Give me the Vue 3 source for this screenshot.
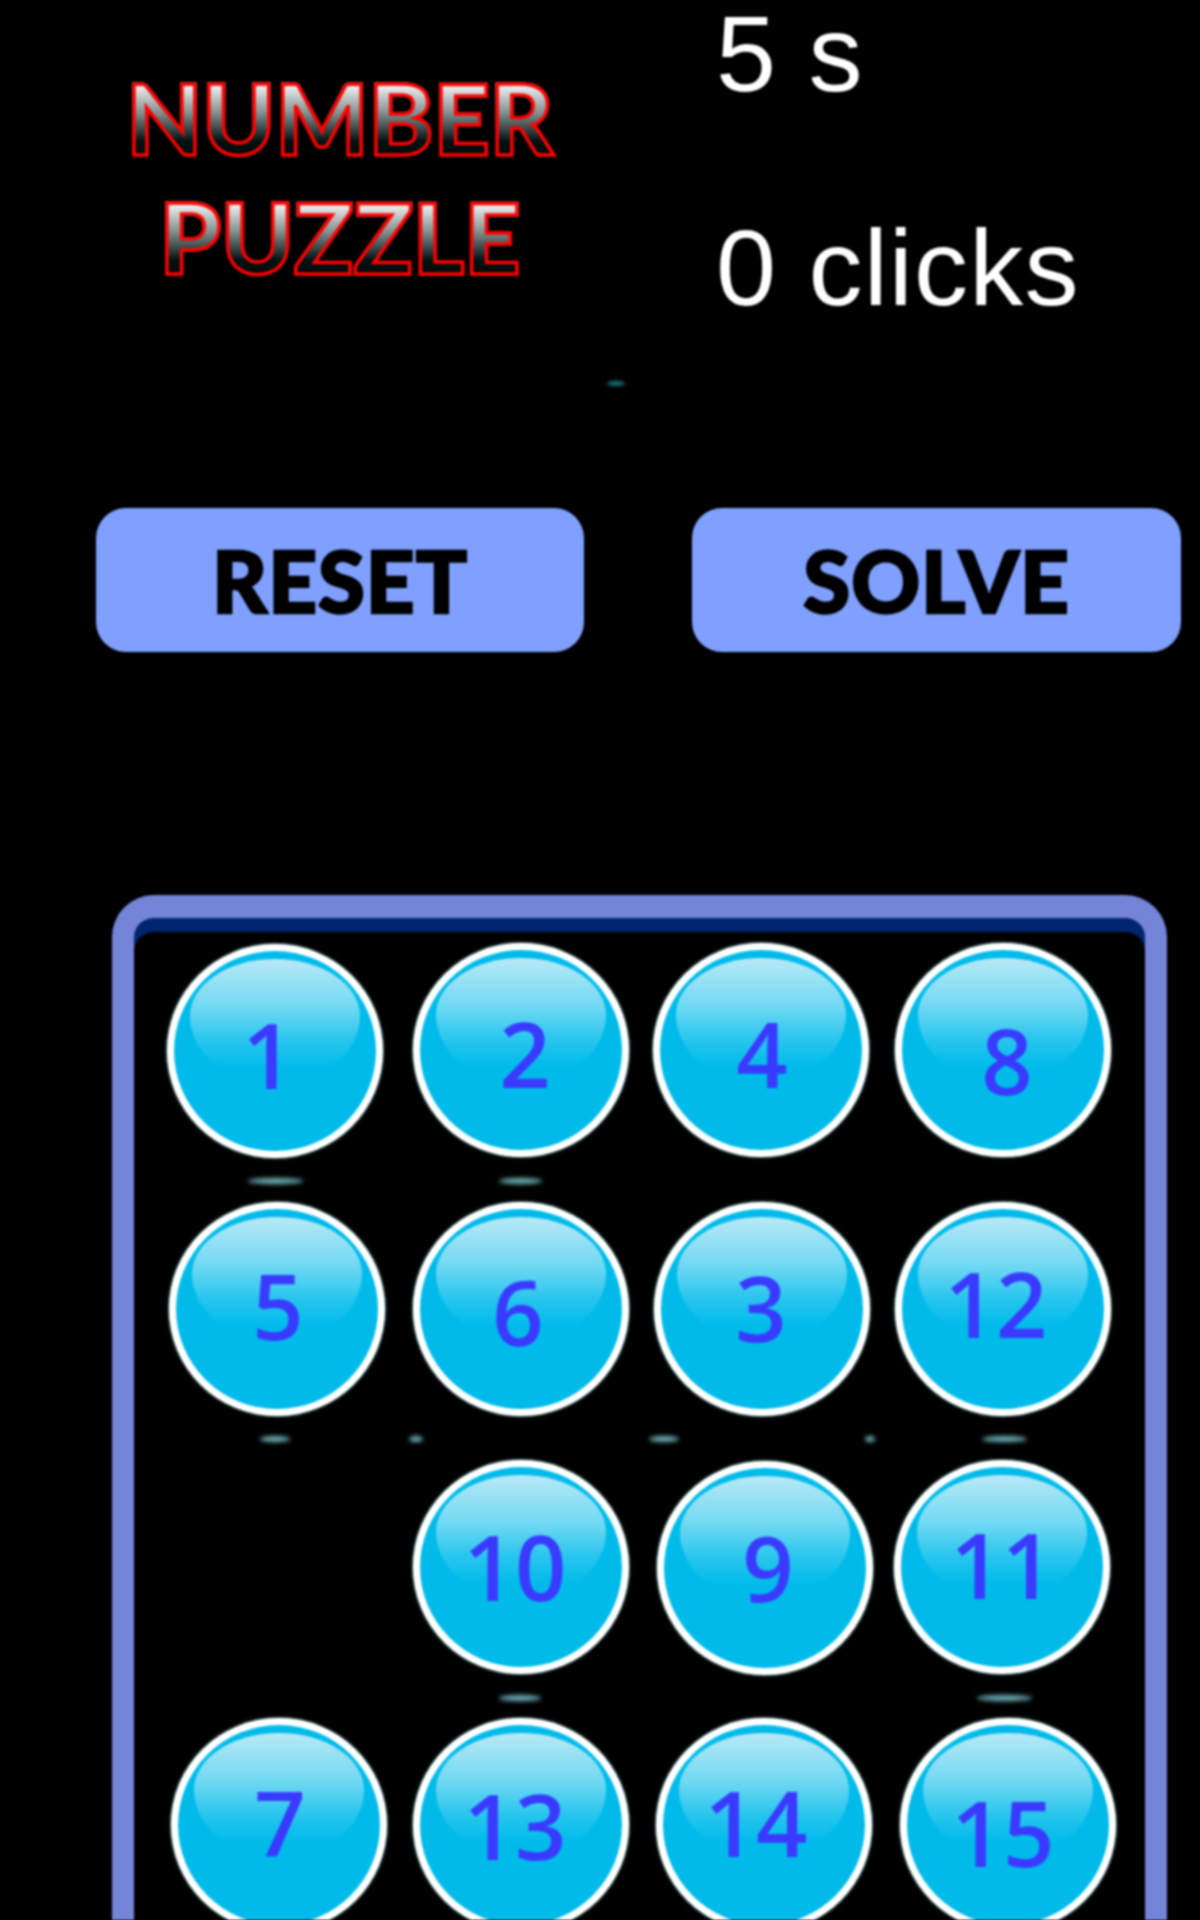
<script setup>
// dx/dy: where the tile sits off its cell, tx/ty: where the number sits in the tile
const tiles = [
  { n: 1, dx: 0, dy: 0, tx: -7, ty: 0 }, { n: 2, dx: 3, dy: -1, tx: 4, ty: 0 },
  { n: 4, dx: 0, dy: -1, tx: 1, ty: 0 }, { n: 8, dx: -1, dy: -1, tx: 4, ty: 7 },
  { n: 5, dx: 2, dy: 0, tx: 1, ty: -7 }, { n: 6, dx: 3, dy: 0, tx: -3, ty: -1 },
  { n: 3, dx: 1, dy: 0, tx: -1, ty: -5 }, { n: 12, dx: -1, dy: 0, tx: -7, ty: -9 },
  { n: null, dx: 0, dy: 0 }, { n: 10, dx: 3, dy: 0, tx: -6, ty: -4 },
  { n: 9, dx: 4, dy: 1, tx: 3, ty: -4 }, { n: 11, dx: -2, dy: 0, tx: 0, ty: -6 },
  { n: 7, dx: 4, dy: 0, tx: 1, ty: -6 }, { n: 13, dx: 3, dy: 0, tx: -6, ty: -3 },
  { n: 14, dx: 3, dy: 0, tx: -8, ty: -6 }, { n: 15, dx: 4, dy: 0, tx: -5, ty: 4 }
];

// little leftover glints between the rows, relative to the board
const glints = [
  { x: 141, y: 260, w: 55 }, { x: 386, y: 260, w: 43 },
  { x: 141, y: 518, w: 30 }, { x: 282, y: 518, w: 14 }, { x: 530, y: 518, w: 30 },
  { x: 736, y: 518, w: 10 }, { x: 870, y: 518, w: 45 },
  { x: 386, y: 777, w: 42 }, { x: 870, y: 777, w: 55 }
];
</script>

<template>
  <div class="page">
    <div class="top">
      <div class="title">
        <span>NUMBER</span>
        <span>PUZZLE</span>
      </div>
      <div class="stats">
        <div>5 s</div>
        <div>0 clicks</div>
      </div>
    </div>

    <div class="top-glint"></div>

    <div class="buttons">
      <button class="btn">RESET</button>
      <button class="btn">SOLVE</button>
    </div>

    <div class="board">
      <div class="grid">
        <div v-for="(t, i) in tiles" :key="i" class="cell">
          <div
            v-if="t.n"
            class="tile"
            :style="{ transform: `translate(${t.dx}px, ${t.dy}px)` }"
          >
            <span :style="{ transform: `translate(${t.tx}px, ${t.ty}px)` }">{{ t.n }}</span>
          </div>
        </div>
      </div>
      <i
        v-for="(g, i) in glints"
        :key="i"
        class="glint"
        :style="{ left: g.x - g.w / 2 + 'px', top: g.y + 'px', width: g.w + 'px' }"
      ></i>
    </div>
  </div>
</template>

<style>
html,
body {
  background: #000;
  margin: 0;
}
</style>

<style scoped>
.page {
  position: relative;
  width: 1200px;
  height: 1920px;
  overflow: hidden;
  background: #000;
  filter: blur(0.8px);
}

.top {
  display: grid;
  grid-template-columns: 488px 1fr;
  column-gap: 132px;
  padding-left: 96px;
}

.title {
  display: flex;
  flex-direction: column;
  align-items: center;
  padding-top: 58px;
  font-family: Lato, sans-serif;
  font-weight: 900;
  font-size: 98px;
  line-height: 119px;
}

.title span {
  background: linear-gradient(180deg, #fff 20%, #82908f 46%, #011 70%, #000 100%);
  -webkit-background-clip: text;
  background-clip: text;
  color: transparent;
  -webkit-text-stroke: 3.5px #f00;
}

.stats {
  display: flex;
  flex-direction: column;
  gap: 106px;
  font-family: "Liberation Sans", Arial, sans-serif;
  font-size: 108px;
  line-height: 108px;
  letter-spacing: 1.2px;
  color: #fff;
}

.top-glint {
  position: absolute;
  left: 607px;
  top: 381px;
  width: 18px;
  height: 5px;
  border-radius: 50%;
  background: #1f6f78;
  filter: blur(1.5px);
}

.buttons {
  display: grid;
  grid-template-columns: 488px 489px;
  column-gap: 108px;
  margin-top: 186px;
  padding-left: 96px;
}

.btn {
  height: 144px;
  border: none;
  border-radius: 30px;
  background: #80a0ff;
  color: #000;
  font-family: Lato, sans-serif;
  font-weight: 900;
  font-size: 85px;
  letter-spacing: 1px;
  -webkit-text-stroke: 2.5px #000;
  padding: 0;
}

.board {
  position: relative;
  box-sizing: border-box;
  width: 1055px;
  height: 1100px;
  margin: 243px 0 0 112px;
  border: 22px solid #7484d8;
  border-top-width: 23px;
  border-radius: 42px;
  background: #000;
  box-shadow: inset 0 14px 0 #00256f;
}

.grid {
  display: grid;
  grid-template-columns: repeat(4, 216px);
  grid-auto-rows: 216px;
  column-gap: 27px;
  row-gap: 42px;
  padding: 26px 0 0 33px;
}

.tile {
  position: relative;
  box-sizing: border-box;
  width: 216px;
  height: 214px;
  border: 7px solid #fff;
  border-radius: 50%;
  background: #00bbea;
  box-shadow: 0 0 3px #9fe6f0;
  display: flex;
  align-items: center;
  justify-content: center;
  padding-top: 6px;
  overflow: hidden;
}

.tile::before {
  content: "";
  position: absolute;
  left: 16px;
  right: 16px;
  top: 8px;
  height: 124px;
  border-radius: 50% / 46% 46% 54% 54%;
  background: linear-gradient(180deg, #b8e9f6 0%, #73d9f3 38%, #2ac6ee 65%, #00bbea 88%);
}

.tile span {
  position: relative;
  font-family: "Open Sans", sans-serif;
  font-weight: 600;
  font-size: 90px;
  line-height: 1;
  color: #3a3aff;
}

.glint {
  position: absolute;
  height: 6px;
  border-radius: 50%;
  background: #6fb4ba;
  filter: blur(2px);
}
</style>
